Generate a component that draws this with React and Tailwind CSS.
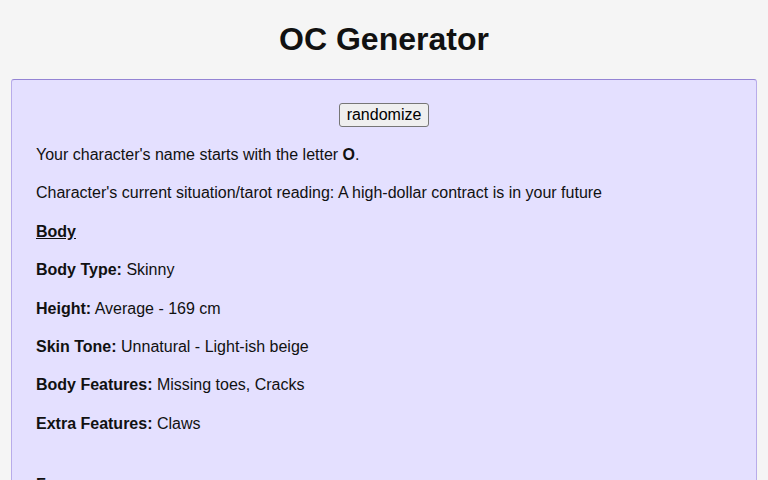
import React from "react";

const rows = [
  ["Body Type:", "Skinny"],
  ["Height:", "Average - 169 cm"],
  ["Skin Tone:", "Unnatural - Light-ish beige"],
  ["Body Features:", "Missing toes, Cracks"],
  ["Extra Features:", "Claws"],
];

export default function App() {
  return (
    <div className="min-h-screen bg-[#f5f5f5] text-[#111] font-['Liberation_Sans',Arial,sans-serif] text-base pb-10">
      <h1 className="text-[32px] leading-[37px] font-bold text-center py-[21px]">
        OC Generator
      </h1>
      <div className="mx-[11px] rounded-[3px] border border-[#b8acea] border-t-[#9484d4] bg-[#e4e0ff] px-6 pt-[23px] pb-6">
        <div className="flex justify-center">
          <button className="px-[7px] h-6 leading-[20px] bg-[#efefef] border border-[#767676] rounded-[3px] text-base text-black">
            randomize
          </button>
        </div>
        <div className="leading-[22.4px] space-y-4 mt-[17px]">
          <p>
            Your character's name starts with the letter <b>O</b>.
          </p>
          <p>
            Character's current situation/tarot reading: A high-dollar contract
            is in your future
          </p>
          <p>
            <b className="underline">Body</b>
          </p>
          {rows.map(([k, v]) => (
            <p key={k}>
              <b>{k}</b> {v}
            </p>
          ))}
          <p className="pt-[23px]">
            <b className="underline">Face</b>
          </p>
          <p>
            <b>Face Shape:</b> Oval
          </p>
        </div>
      </div>
    </div>
  );
}
